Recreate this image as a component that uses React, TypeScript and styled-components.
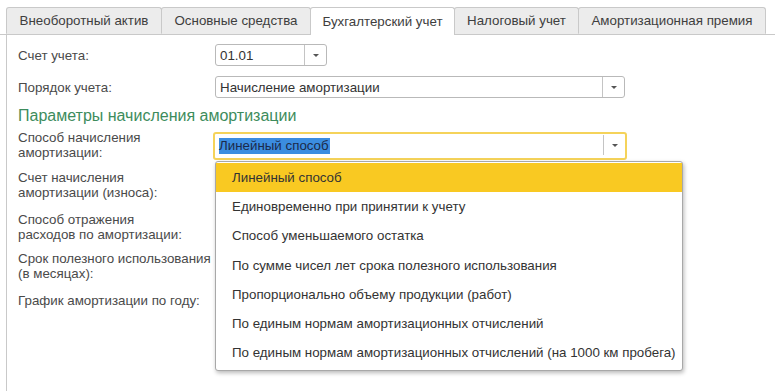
import React from "react";
import styled, { createGlobalStyle } from "styled-components";

const Global = createGlobalStyle`
  html, body { margin: 0; padding: 0; background: #fff; }
  body { font-family: "Liberation Sans", Arial, sans-serif; font-size: 13.33px; color: #4a4a4a; }
`;

const Page = styled.div`
  width: 775px;
  height: 391px;
  overflow: hidden;
  background: #fff;
  display: flex;
  flex-direction: column;
`;

const TabBar = styled.div`
  display: flex;
  align-items: flex-end;
  padding: 8px 0 0 6px;
  height: 35px;
  box-sizing: border-box;
  border-bottom: 1px solid #c9c9c9;
`;

const Tab = styled.div<{ $w: number; $active?: boolean }>`
  width: ${(p) => p.$w}px;
  height: ${(p) => (p.$active ? 28 : 27)}px;
  box-sizing: border-box;
  margin-left: -1px;
  margin-bottom: ${(p) => (p.$active ? -1 : 0)}px;
  &:first-child { margin-left: 0; }
  border: 1px solid #c9c9c9;
  border-bottom: ${(p) => (p.$active ? "none" : "1px solid transparent")};
  border-radius: 3px 3px 0 0;
  background: ${(p) => (p.$active ? "#fff" : "#ececec")};
  color: #3e3e3e;
  display: flex;
  align-items: center;
  justify-content: center;
  font-size: 13.33px;
  padding-bottom: ${(p) => (p.$active ? 1 : 0)}px;
  position: relative;
  z-index: ${(p) => (p.$active ? 1 : 0)};
`;

const Content = styled.div`
  flex: 1;
  margin-left: 6px;
  border-left: 1px solid #c9c9c9;
  padding: 9px 0 0 11px;
  display: flex;
  flex-direction: column;
`;

const Row = styled.div<{ $h: number; $gap: number }>`
  display: grid;
  grid-template-columns: 197px auto;
  align-items: center;
  height: ${(p) => p.$h}px;
  margin-bottom: ${(p) => p.$gap}px;
  position: relative;
`;

const Label = styled.div`
  line-height: 15px;
  color: #4a4a4a;
  font-size: 13.33px;
  white-space: nowrap;
`;

const Header = styled.div`
  color: #3d8c5c;
  font-size: 16px;
  line-height: 20px;
  margin: 8px 0 3px 0;
`;

const Field = styled.div<{ $w: number; $focused?: boolean }>`
  width: ${(p) => p.$w}px;
  height: ${(p) => (p.$focused ? 28 : 22)}px;
  box-sizing: border-box;
  border: ${(p) => (p.$focused ? "2px solid #f5d35a" : "1px solid #b9b9b9")};
  margin-left: ${(p) => (p.$focused ? -2 : 0)}px;
  border-radius: 3px;
  display: flex;
  align-items: stretch;
  background: #fff;
  align-self: ${(p) => (p.$focused ? "start" : "center")};
  margin-top: ${(p) => (p.$focused ? 3 : 0)}px;
`;

const FieldText = styled.div`
  flex: 1;
  display: flex;
  align-items: center;
  padding-left: 4px;
  color: #333;
  font-size: 13.33px;
`;

const Selected = styled.span`
  background: #3b8de0;
  color: #1b2a4a;
  line-height: 16px;
  padding: 0 1px 0 0;
`;

const DropButton = styled.div<{ $focused?: boolean }>`
  width: 21px;
  border-left: 1px solid #c4c4c4;
  margin: ${(p) => (p.$focused ? "1px 0 3px" : "0")};
  display: flex;
  align-items: center;
  justify-content: center;
`;

const Arrow = styled.div`
  width: 0;
  height: 0;
  border-left: 3px solid transparent;
  border-right: 3px solid transparent;
  border-top: 3px solid #555;
`;

const Popup = styled.div`
  position: absolute;
  top: 32px;
  left: 0;
  width: 468px;
  box-sizing: border-box;
  border: 1px solid #a8a8a8;
  border-radius: 3px;
  background: #fff;
  box-shadow: 1px 2px 4px rgba(0, 0, 0, 0.28);
  padding: 1px 0 3px;
  z-index: 5;
`;

const Item = styled.div<{ $active?: boolean }>`
  height: 29.2px;
  display: flex;
  align-items: center;
  padding-left: 16px;
  background: ${(p) => (p.$active ? "#f9c922" : "transparent")};
  color: #333;
  font-size: 13.33px;
  white-space: nowrap;
`;

const FieldCell = styled.div`
  position: relative;
  height: 100%;
  display: flex;
`;

const tabs = [
  { t: "Внеоборотный актив", w: 156 },
  { t: "Основные средства", w: 150 },
  { t: "Бухгалтерский учет", w: 145, active: true },
  { t: "Налоговый учет", w: 125 },
  { t: "Амортизационная премия", w: 188 },
];

const options = [
  "Линейный способ",
  "Единовременно при принятии к учету",
  "Способ уменьшаемого остатка",
  "По сумме чисел лет срока полезного использования",
  "Пропорционально объему продукции (работ)",
  "По единым нормам амортизационных отчислений",
  "По единым нормам амортизационных отчислений (на 1000 км пробега)",
];

const Dropdown = ({ focused }: { focused?: boolean }) => (
  <DropButton $focused={focused}>
    <Arrow />
  </DropButton>
);

export default function App() {
  return (
    <>
      <Global />
      <Page>
        <TabBar>
          {tabs.map((t) => (
            <Tab key={t.t} $w={t.w} $active={t.active}>
              {t.t}
            </Tab>
          ))}
        </TabBar>
        <Content>
          <Row $h={22} $gap={10}>
            <Label>Счет учета:</Label>
            <Field $w={112}>
              <FieldText>01.01</FieldText>
              <Dropdown />
            </Field>
          </Row>
          <Row $h={22} $gap={0}>
            <Label>Порядок учета:</Label>
            <Field $w={410}>
              <FieldText>Начисление амортизации</FieldText>
              <Dropdown />
            </Field>
          </Row>
          <Header>Параметры начисления амортизации</Header>
          <Row $h={31} $gap={9}>
            <Label>
              Способ начисления
              <br />
              амортизации:
            </Label>
            <FieldCell>
              <Field $w={414} $focused>
                <FieldText>
                  <Selected>Линейный способ</Selected>
                </FieldText>
                <Dropdown focused />
              </Field>
              <Popup>
                {options.map((o, i) => (
                  <Item key={o} $active={i === 0}>
                    {o}
                  </Item>
                ))}
              </Popup>
            </FieldCell>
          </Row>
          <Row $h={31} $gap={11}>
            <Label>
              Счет начисления
              <br />
              амортизации (износа):
            </Label>
          </Row>
          <Row $h={31} $gap={8}>
            <Label>
              Способ отражения
              <br />
              расходов по амортизации:
            </Label>
          </Row>
          <Row $h={31} $gap={11}>
            <Label>
              Срок полезного использования
              <br />
              (в месяцах):
            </Label>
          </Row>
          <Row $h={16} $gap={0}>
            <Label>График амортизации по году:</Label>
          </Row>
        </Content>
      </Page>
    </>
  );
}
